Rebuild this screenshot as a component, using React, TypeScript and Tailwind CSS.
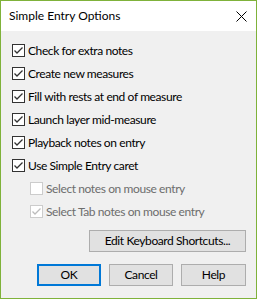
import React from "react";

type Opt = { label: string; checked: boolean; disabled?: boolean; sub?: boolean };

const options: Opt[] = [
  { label: "Check for extra notes", checked: true },
  { label: "Create new measures", checked: true },
  { label: "Fill with rests at end of measure", checked: true },
  { label: "Launch layer mid-measure", checked: true },
  { label: "Playback notes on entry", checked: true },
  { label: "Use Simple Entry caret", checked: true },
  { label: "Select notes on mouse entry", checked: false, disabled: true, sub: true },
  { label: "Select Tab notes on mouse entry", checked: true, disabled: true, sub: true },
];

function Box({ checked, disabled }: { checked: boolean; disabled?: boolean }) {
  return (
    <span
      className={`flex size-[13px] shrink-0 items-center justify-center border bg-white ${
        disabled ? "border-[#cccccc]" : "border-[#333333]"
      }`}
    >
      {checked && (
        <svg viewBox="0 0 11 11" className="size-[11px]" fill="none">
          <path
            d="M1.5 5.5L4 8L9.5 2.5"
            stroke={disabled ? "#bcbcbc" : "#333333"}
            strokeWidth="1.3"
          />
        </svg>
      )}
    </span>
  );
}

function Btn({ children, primary, className = "" }: { children: React.ReactNode; primary?: boolean; className?: string }) {
  return (
    <button
      className={`flex h-[22px] items-center justify-center bg-[#e1e1e1] tracking-[-0.4px] text-black ${
        primary ? "border-2 border-[#0078d7]" : "border border-[#adadad]"
      } ${className}`}
    >
      {children}
    </button>
  );
}

export default function App() {
  return (
    <div className="flex h-[299px] w-[257px] flex-col border border-[#7fb23a] bg-[#f0f0f0] font-['Lato',sans-serif] text-[12px] leading-none text-black">
      {/* title bar */}
      <div className="flex h-[30px] shrink-0 items-center justify-between bg-white pl-[8px] pr-[9px]">
        <span>Simple Entry Options</span>
        <svg viewBox="0 0 11 11" className="size-[11px]" fill="none" stroke="#000" strokeWidth="1">
          <path d="M0.5 0.5L10.5 10.5M10.5 0.5L0.5 10.5" />
        </svg>
      </div>

      <div className="flex flex-1 flex-col pt-[8px]">
        {options.map((o) => (
          <label
            key={o.label}
            className={`flex h-[23px] items-center gap-[3px] tracking-[-0.4px] ${o.sub ? "pl-[29px]" : "pl-[11px]"} ${
              o.disabled ? "text-[#6d6d6d]" : ""
            }`}
          >
            <Box checked={o.checked} disabled={o.disabled} />
            <span>{o.label}</span>
          </label>
        ))}

        <div className="mt-[7px] flex justify-end pr-[10px]">
          <Btn className="w-[157px]">Edit Keyboard Shortcuts...</Btn>
        </div>

        <div className="mt-[12px] flex justify-end gap-[8px] pr-[10px]">
          <Btn primary className="w-[64px]">OK</Btn>
          <Btn className="w-[64px]">Cancel</Btn>
          <Btn className="w-[65px]">Help</Btn>
        </div>
      </div>
    </div>
  );
}
